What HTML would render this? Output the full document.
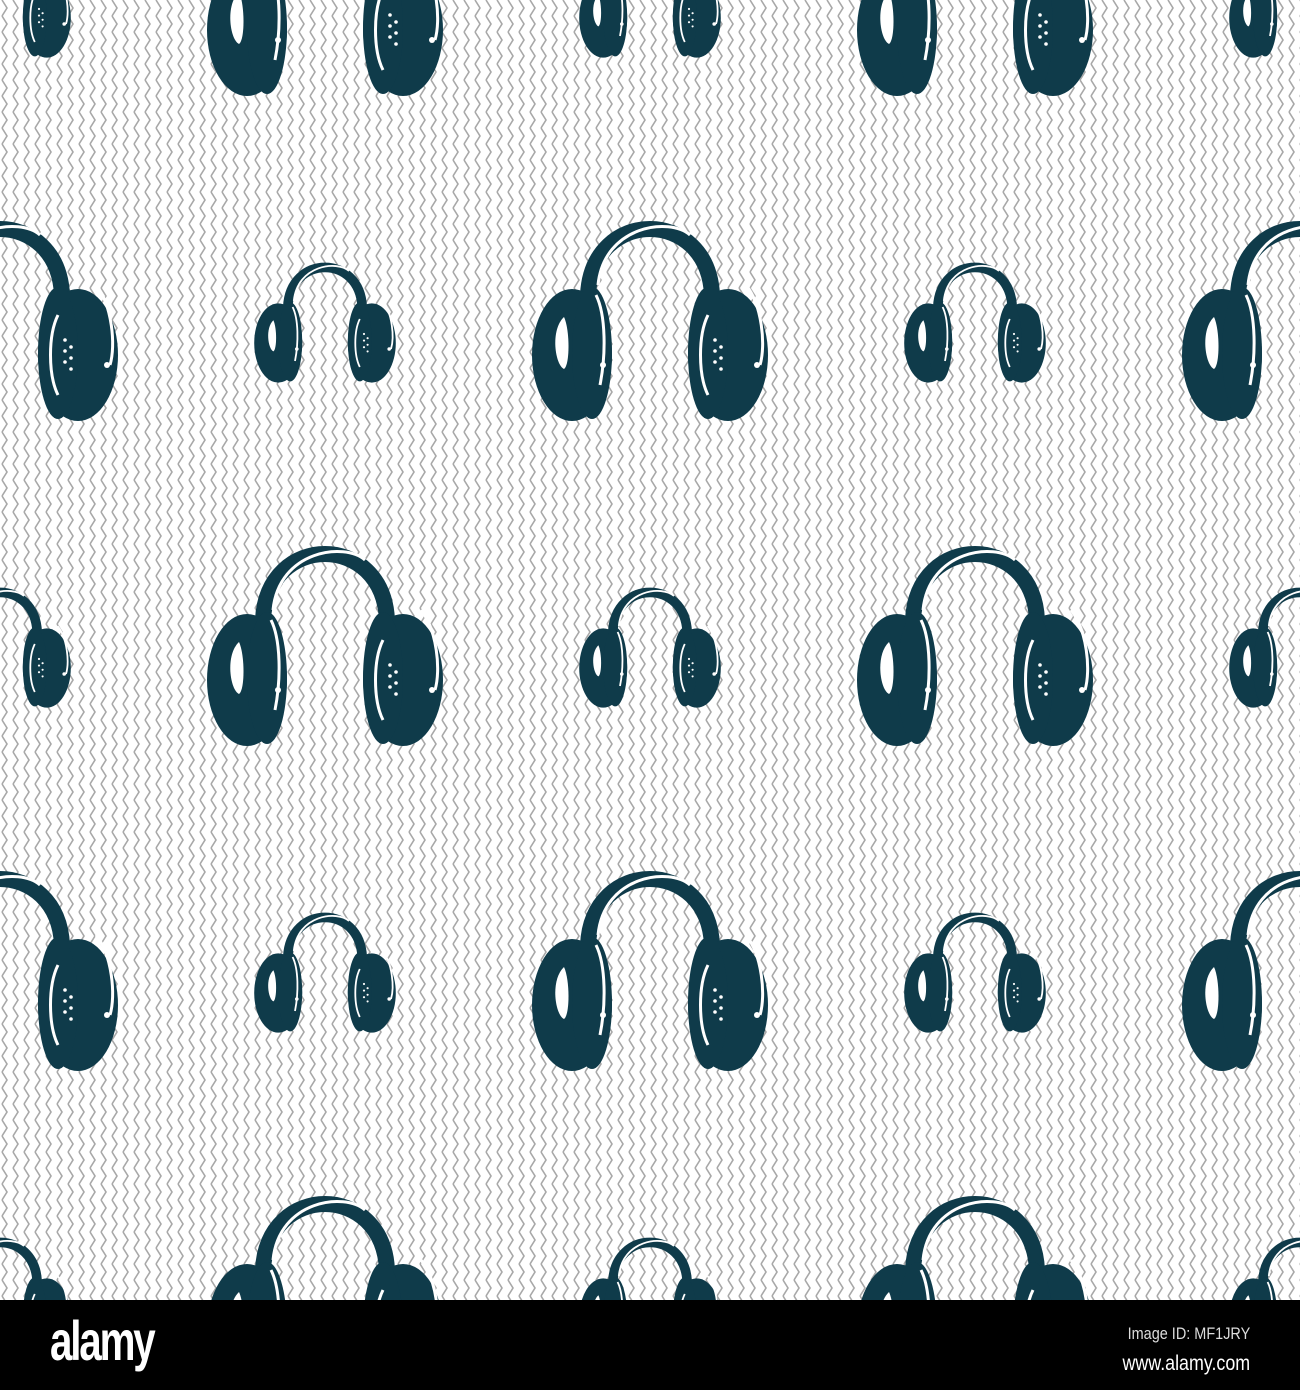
<!DOCTYPE html>
<html><head><meta charset="utf-8"><style>
html,body{margin:0;padding:0;width:1300px;height:1390px;overflow:hidden;background:#fff}
.bar{position:absolute;left:0;top:1300px;width:1300px;height:90px;background:#000;color:#fff;font-family:"Liberation Sans",sans-serif}
.logo{position:absolute;left:50px;top:8px;font-size:56px;font-weight:bold;letter-spacing:-3px;transform:scaleX(0.72);transform-origin:left top}
.id{position:absolute;right:50px;top:24px;font-size:17px;transform:scaleX(0.85);transform-origin:right top;color:#ddd}
.www{position:absolute;right:50px;top:52px;font-size:21px;transform:scaleX(0.85);transform-origin:right top}
</style></head><body>
<svg width="1300" height="1300" style="position:absolute;left:0;top:0">
<defs>
<pattern id="z" width="11" height="16" patternUnits="userSpaceOnUse">
<polyline points="2,0 7,8 2,16" fill="none" stroke="#a8a8a8" stroke-width="1.6"/>
</pattern>
<g id="hp">
<path d="M-62,-30 C-58,-118 58,-118 62,-30" fill="none" stroke="#0f3b4a" stroke-width="16"/>
<path d="M-52,-40 C-46,-100 20,-108 40,-90" fill="none" stroke="#fff" stroke-width="3"/>
<ellipse cx="-78" cy="30" rx="40" ry="66" fill="#0f3b4a"/>
<ellipse cx="-58" cy="28" rx="20" ry="66" fill="#0f3b4a"/>
<ellipse cx="78" cy="30" rx="40" ry="66" fill="#0f3b4a"/>
<ellipse cx="58" cy="28" rx="20" ry="66" fill="#0f3b4a"/>
<path d="M-86,-8 C-100,5 -95,40 -86,44 C-80,40 -80,5 -86,-8Z" fill="#fff"/>
<path d="M-54,-30 C-44,-10 -44,30 -50,60" fill="none" stroke="#fff" stroke-width="3"/>
<circle cx="-47" cy="40" r="3" fill="#fff"/>
<path d="M58,-10 C48,10 48,50 58,70" fill="none" stroke="#fff" stroke-width="3"/>
<path d="M96,-40 C112,-20 116,20 110,40" fill="none" stroke="#fff" stroke-width="3"/>
<circle cx="107" cy="40" r="3" fill="#fff"/>
<g fill="#fff"><circle cx="65" cy="15" r="1.8"/><circle cx="65" cy="26" r="1.8"/><circle cx="65" cy="37" r="1.8"/><circle cx="71" cy="22" r="1.8"/><circle cx="71" cy="33" r="1.8"/><circle cx="71" cy="44" r="1.8"/></g>
</g>
</defs>
<rect width="1300" height="1300" fill="url(#z)"/>
<use href="#hp" transform="translate(325,0)"/>
<use href="#hp" transform="translate(975,0)"/>
<use href="#hp" transform="translate(0,325)"/>
<use href="#hp" transform="translate(650,325)"/>
<use href="#hp" transform="translate(1300,325)"/>
<use href="#hp" transform="translate(325,650)"/>
<use href="#hp" transform="translate(975,650)"/>
<use href="#hp" transform="translate(0,975)"/>
<use href="#hp" transform="translate(650,975)"/>
<use href="#hp" transform="translate(1300,975)"/>
<use href="#hp" transform="translate(325,1300)"/>
<use href="#hp" transform="translate(975,1300)"/>
<use href="#hp" transform="translate(0,0) scale(0.6)"/>
<use href="#hp" transform="translate(650,0) scale(0.6)"/>
<use href="#hp" transform="translate(1300,0) scale(0.6)"/>
<use href="#hp" transform="translate(325,325) scale(0.6)"/>
<use href="#hp" transform="translate(975,325) scale(0.6)"/>
<use href="#hp" transform="translate(0,650) scale(0.6)"/>
<use href="#hp" transform="translate(650,650) scale(0.6)"/>
<use href="#hp" transform="translate(1300,650) scale(0.6)"/>
<use href="#hp" transform="translate(325,975) scale(0.6)"/>
<use href="#hp" transform="translate(975,975) scale(0.6)"/>
<use href="#hp" transform="translate(0,1300) scale(0.6)"/>
<use href="#hp" transform="translate(650,1300) scale(0.6)"/>
<use href="#hp" transform="translate(1300,1300) scale(0.6)"/>
</svg>
<div class="bar">
<div class="logo">alamy</div>
<div class="id">Image ID: MF1JRY</div>
<div class="www">www.alamy.com</div>
</div>
</body></html>
